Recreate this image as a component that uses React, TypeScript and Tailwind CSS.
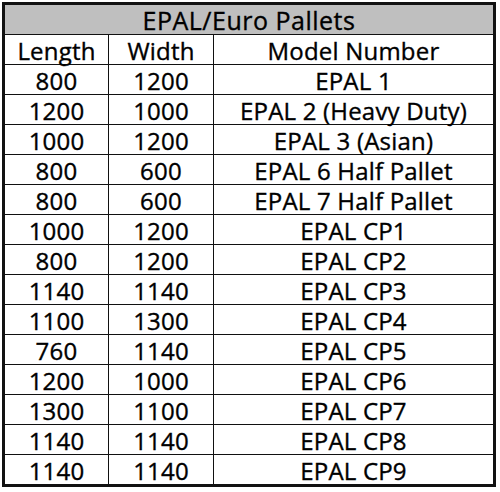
const rows: [string, string, string][] = [
  ["800", "1200", "EPAL 1"],
  ["1200", "1000", "EPAL 2 (Heavy Duty)"],
  ["1000", "1200", "EPAL 3 (Asian)"],
  ["800", "600", "EPAL 6 Half Pallet"],
  ["800", "600", "EPAL 7 Half Pallet"],
  ["1000", "1200", "EPAL CP1"],
  ["800", "1200", "EPAL CP2"],
  ["1140", "1140", "EPAL CP3"],
  ["1100", "1300", "EPAL CP4"],
  ["760", "1140", "EPAL CP5"],
  ["1200", "1000", "EPAL CP6"],
  ["1300", "1100", "EPAL CP7"],
  ["1140", "1140", "EPAL CP8"],
  ["1140", "1140", "EPAL CP9"],
];

function Row({ cells, last }: { cells: [string, string, string]; last?: boolean }) {
  return (
    <div className={`flex ${last ? "h-[29px]" : "h-[30px] border-b border-[#111]"}`}>
      <div className="flex w-[104px] items-center justify-center border-r border-[#111] pt-[2px]">
        {cells[0]}
      </div>
      <div className="flex w-[105px] items-center justify-center border-r border-[#111] pt-[2px]">
        {cells[1]}
      </div>
      <div className="flex flex-1 items-center justify-center pt-[2px]">{cells[2]}</div>
    </div>
  );
}

export default function App() {
  return (
    <div className="h-[492px] w-[500px] bg-white p-[2px]">
      <div
        className="w-[494px] border-[3px] border-[#111] text-[24px] leading-none tracking-[0.2px] text-black [-webkit-text-stroke:0.35px_black]"
        style={{ fontFamily: '"Open Sans", sans-serif' }}
      >
        <div className="flex h-[30px] items-center justify-center border-b border-[#111] bg-[#bfbfbf] pt-[2px] text-[25px] tracking-[0.5px]">
          EPAL/Euro Pallets
        </div>
        <Row cells={["Length", "Width", "Model Number"]} />
        {rows.map((r, i) => (
          <Row key={i} cells={r} last={i === rows.length - 1} />
        ))}
      </div>
    </div>
  );
}
